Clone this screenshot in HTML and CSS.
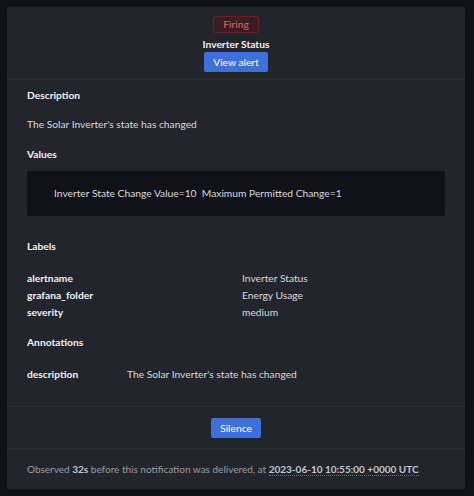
FILE: index.html
```html
<!DOCTYPE html>
<html>
<head>
<meta charset="utf-8">
<link rel="stylesheet" href="styles.css">
</head>
<body>
<div class="card">
  <div class="header">
    <div class="badge">Firing</div>
    <div class="title">Inverter Status</div>
    <div><span class="btn">View alert</span></div>
  </div>
  <div class="body">
    <div class="h">Description</div>
    <div class="text">The Solar Inverter's state has changed</div>
    <div class="h h-values">Values</div>
    <div class="values">Inverter State Change Value=10&nbsp; Maximum Permitted Change=1</div>
    <div class="h h-labels">Labels</div>
    <div class="kv kv-labels">
      <div class="k">alertname</div><div class="v">Inverter Status</div>
      <div class="k">grafana_folder</div><div class="v">Energy Usage</div>
      <div class="k">severity</div><div class="v">medium</div>
    </div>
    <div class="h h-ann">Annotations</div>
    <div class="kv kv-ann">
      <div class="k">description</div><div class="v">The Solar Inverter's state has changed</div>
    </div>
  </div>
  <div class="actions"><span class="btn btn-silence">Silence</span></div>
  <div class="footer">Observed <b>32s</b> before this notification was delivered, at <b class="date">2023-06-10 10:55:00 +0000 UTC</b></div>
</div>
</body>
</html>
```

FILE: styles.css
```css
html, body {
  margin: 0;
  padding: 0;
  background: #111217;
}
body {
  padding: 7px;
  font-family: Lato, "Noto Sans", sans-serif;
  font-size: 10.25px;
  color: #d8d9dd;
}
.card {
  width: 458px;
  background: #22252b;
  border-radius: 2px;
}
.header {
  text-align: center;
  padding: 9px 0 7px;
  border-bottom: 1px solid #2c2f36;
}
.badge {
  display: inline-block;
  box-sizing: border-box;
  height: 17px;
  line-height: 15px;
  padding: 0 9px;
  border: 1px solid #6b1f27;
  background: #3a1d22;
  color: #d5646e;
  border-radius: 2px;
}
.title {
  margin-top: 3px;
  line-height: 16px;
  font-weight: 700;
  color: #f0f0f2;
}
.btn {
  display: inline-block;
  vertical-align: top;
  height: 20px;
  line-height: 20px;
  padding: 0 9px;
  background: #3d71d9;
  color: #ffffff;
  border-radius: 2px;
}
.body {
  padding: 8px 20px 23px;
  border-bottom: 1px solid #2c2f36;
}
.h {
  line-height: 14px;
  font-weight: 700;
  color: #f0f0f2;
}
.text {
  margin-top: 15px;
  line-height: 14px;
}
.h-values { margin-top: 16px; }
.values {
  margin-top: 10px;
  height: 45px;
  line-height: 45px;
  background: #111217;
  padding-left: 27px;
  border-radius: 2px;
}
.h-labels { margin-top: 23px; }
.h-ann { margin-top: 14px; }
.kv {
  display: grid;
  line-height: 17px;
}
.kv-labels {
  margin-top: 17px;
  grid-template-columns: 215px 1fr;
}
.kv-ann {
  margin-top: 17px;
  grid-template-columns: 100px 1fr;
}
.k {
  font-weight: 700;
  color: #f0f0f2;
}
.actions {
  text-align: center;
  padding: 11px 0 10px;
  line-height: 20px;
  border-bottom: 1px solid #2c2f36;
}
.footer {
  padding: 13px 20px;
  font-size: 10px;
  line-height: 14px;
  color: #9a9ca3;
}
.footer b {
  color: #c4c6cc;
}
.date {
  border-bottom: 1px dotted #6c6f76;
}
```
